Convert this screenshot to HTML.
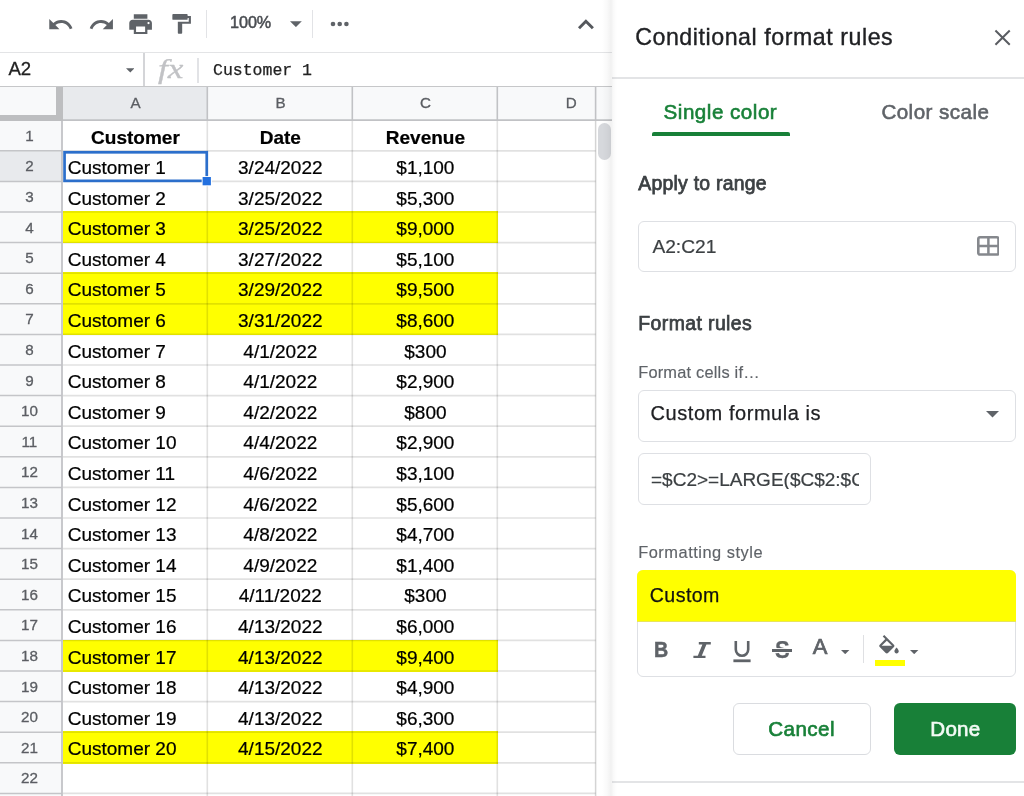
<!DOCTYPE html>
<html><head><meta charset="utf-8"><title>Sheets</title>
<style>
*{box-sizing:border-box;margin:0;padding:0}
html,body{width:1024px;height:796px;overflow:hidden;background:#fff}
body{font-family:"Liberation Sans",sans-serif;color:#000}
#app{will-change:transform;position:relative;width:1024px;height:796px;overflow:hidden;background:#fff}
.abs{position:absolute}
/* toolbar */
#tb{position:absolute;left:0;top:0;width:612px;height:52.5px;background:#fff;border-bottom:1.5px solid #e3e4e6}
#tb svg{position:absolute;fill:#5f6368}
.sep{position:absolute;width:1.5px;background:#e2e3e6}
.zoomtxt{position:absolute;left:230.1px;top:11.4px;font-size:16.2px;line-height:22px;color:#4a4d52;-webkit-text-stroke:0.5px #4a4d52;letter-spacing:-0.1px}
/* formula bar */
#fb{position:absolute;left:0;top:53px;width:612px;height:33.5px;background:#fff}
.nm{position:absolute;left:8.6px;top:4.7px;font-size:18.6px;line-height:22px;color:#222;letter-spacing:-0.2px;-webkit-text-stroke:0.3px #222}
.fx{position:absolute;left:157.6px;top:1.6px;font-family:"Liberation Serif",serif;font-style:italic;font-size:28px;line-height:28px;color:#c1c2c5;transform:scaleX(1.26);transform-origin:left;-webkit-text-stroke:0.3px #c1c2c5}
.ftxt{position:absolute;left:213px;top:6.7px;font-family:"Liberation Mono",monospace;font-size:16.5px;line-height:22px;color:#222;-webkit-text-stroke:0.25px #222}
/* grid */
#grid{position:absolute;left:0;top:0;width:612px;height:796px;overflow:hidden}

.chrow{position:absolute;left:0;top:86.5px;width:612px;height:33.7px;background:#f8f9fa}
.chtop{position:absolute;left:0;top:85.6px;width:612px;height:1.5px;background:#c6c7c9}
.chsel{position:absolute;left:62.6px;top:87px;width:144.8px;height:33.2px;background:#e8eaed}
.chl{position:absolute;top:93px;width:145px;text-align:center;font-size:15.2px;line-height:20px;color:#5b5e63;-webkit-text-stroke:0.3px #5b5e63;padding-left:1.6px}
.chb{position:absolute;left:62.4px;top:119.4px;width:550px;height:1.6px;background:#c3c4c6}
.chv{position:absolute;top:87px;width:1.6px;height:34px;background:#c3c4c6}
.corner-r{position:absolute;left:56.2px;top:87px;width:6.4px;height:34px;background:#bdbec0}
.corner-b{position:absolute;left:0;top:115.2px;width:62.6px;height:5.8px;background:#bdbec0}
.rh{position:absolute;left:0;width:62px;background:#f8f9fa;text-align:center;font-size:15.2px;color:#5b5e63;-webkit-text-stroke:0.3px #5b5e63}
.rh span{position:absolute;left:0;width:58.8px;top:5.5px;line-height:20px;text-align:center}
.rh.sel{background:#e8eaed}
.rhv{position:absolute;left:61.1px;top:120px;width:1.4px;height:676px;background:#c3c4c6}
.hl{position:absolute;left:62.9px;width:435.2px;background:#ffff00}
.ct{position:absolute;font-size:19px;line-height:22px;height:30.6px;padding-top:6.3px;white-space:nowrap;color:#000;-webkit-text-stroke:0.22px #000}
.ct.c{text-align:center}
.ct.b{font-weight:bold;padding-top:7.1px}
.hline{position:absolute;left:62.4px;width:534px;height:1.5px;background:rgba(0,0,0,0.115)}
.hline.rhl{left:0;width:62px;background:#c6c7ca;height:1.35px}
.vline{position:absolute;top:121px;width:1.4px;height:676px;background:rgba(0,0,0,0.115)}
.selbox{position:absolute;left:63.1px;top:150.5px;width:145.3px;height:31.9px;border:2.6px solid #3273d2;border-top-width:2.9px}
.selh{position:absolute;left:202.6px;top:176.6px;width:9.6px;height:9.6px;background:#2f6fd0;border:1px solid #fff}
.vsb{position:absolute;left:598px;top:122.6px;width:13.4px;height:37.4px;border-radius:7px;background:#d6d8dc}
/* sidebar */
#sb{position:absolute;left:612px;top:0;width:412px;height:796px;background:#fff;color:#202124}
#sbshadow{position:absolute;left:602px;top:0;width:15px;height:796px;z-index:5;background:linear-gradient(to right,rgba(0,0,0,0) 0%,rgba(0,0,0,0.022) 35%,rgba(0,0,0,0.055) 60%,rgba(0,0,0,0.02) 78%,rgba(0,0,0,0) 100%)}
#sb .title{position:absolute;left:23.5px;top:24px;font-size:22.6px;line-height:28px;color:#202124;white-space:nowrap;-webkit-text-stroke:0.25px #202124}
#sb .hb{position:absolute;left:0;top:77px;width:412px;height:1.5px;background:#e3e4e6}
#sb .bb{position:absolute;left:0;top:781.3px;width:412px;height:1.5px;background:#e3e4e6}
.tab{position:absolute;top:99px;font-size:20.5px;line-height:26px;white-space:nowrap;-webkit-text-stroke:0.3px currentColor}
.tab.on{color:#188038}
.tab.off{color:#5f6368}
.tabul{position:absolute;left:40.3px;top:131.8px;width:138px;height:4px;border-radius:2px 2px 0 0;background:#188038}
.h2{position:absolute;left:26px;font-size:18.6px;line-height:24px;font-weight:bold;color:#3c4043;white-space:nowrap;letter-spacing:-0.2px}
.lbl{position:absolute;left:26px;font-size:16.2px;line-height:22px;color:#5f6368;white-space:nowrap}
.box{position:absolute;border:1.4px solid #dee0e4;border-radius:6px;background:#fff}
.boxt{position:absolute;font-size:19px;line-height:24px;color:#3c4043;white-space:nowrap}
.btn{position:absolute;top:703.2px;height:51.4px;border-radius:6px}
.btn.cancel{left:120.6px;width:138.4px;border:1.4px solid #dadce0;background:#fff}
.btn.done{left:282.2px;width:122px;background:#188038}
#sb svg{position:absolute}

.gl{position:absolute;left:0;top:0}

</style></head><body>
<div id="app">
<div id="tb">
<svg style="left:46.6px;top:11px" width="27.2" height="27.2" viewBox="0 0 24 24"><path d="M12.5 8c-2.65 0-5.05.99-6.9 2.6L2 7v9h9l-3.62-3.62c1.39-1.16 3.16-1.88 5.12-1.88 3.54 0 6.55 2.31 7.6 5.5l2.37-.78C21.08 11.03 17.15 8 12.5 8z"/></svg>
<svg style="left:87.5px;top:11px" width="27.2" height="27.2" viewBox="0 0 24 24"><path d="M18.4 10.6C16.55 8.99 14.15 8 11.5 8c-4.65 0-8.58 3.03-9.96 7.22L3.9 16c1.05-3.19 4.05-5.5 7.6-5.5 1.95 0 3.73.72 5.12 1.88L13 16h9V7l-3.6 3.6z"/></svg>
<svg style="left:127.2px;top:11.4px" width="27.2" height="26.4" viewBox="0 0 24 24" preserveAspectRatio="none"><path d="M19 8H5c-1.66 0-3 1.34-3 3v6h4v4h12v-4h4v-6c0-1.660-1.340-3-3-3zm-3 11H8v-5h8v5zm3-7c-.55 0-1-.45-1-1s.45-1 1-1 1 .45 1 1-.45 1-1 1zm-1-9H6v4h12V3z"/></svg>
<svg style="left:168.4px;top:12.3px" width="26.2" height="23.6" viewBox="0 0 24 24" preserveAspectRatio="none"><path d="M18 4V3c0-.55-.45-1-1-1H5c-.55 0-1 .45-1 1v4c0 .55.45 1 1 1h12c.55 0 1-.45 1-1V6h1v4H9v11c0 .55.45 1 1 1h2c.55 0 1-.45 1-1v-9h8V4h-3z"/></svg>
<div class="sep" style="left:205.9px;top:9.7px;height:28px"></div>
<div class="zoomtxt">100%</div>
<svg style="left:289.8px;top:20.6px" width="11.8" height="6.3" viewBox="0 0 12 6"><path d="M0 0h12L6 6z"/></svg>
<div class="sep" style="left:311.8px;top:9.7px;height:28px"></div>
<svg style="left:329.8px;top:21.1px" width="20" height="6" viewBox="0 0 20 6"><circle cx="3" cy="3" r="2.3"/><circle cx="9.7" cy="3" r="2.3"/><circle cx="16.4" cy="3" r="2.3"/></svg>
<svg style="left:575px;top:16px;fill:none" width="22" height="16" viewBox="0 0 22 16"><path d="M4 12.2 L10.9 5.2 L17.9 12.2" stroke="#55585d" stroke-width="2.9" fill="none"/></svg>
</div>
<div id="fb">
<div class="nm">A2</div>
<svg style="position:absolute;left:125.6px;top:15px;fill:#5f6368" width="8.6" height="4.6" viewBox="0 0 12 6"><path d="M0 0h12L6 6z"/></svg>
<div class="sep" style="left:143.4px;top:0px;height:33px;background:#d4d5d8"></div>
<div class="fx">fx</div>
<div class="sep" style="left:197.4px;top:4.5px;height:25px"></div>
<div class="ftxt">Customer 1</div>
</div>

<div id="grid">
<div class="rh" style="top:120.2px;height:30.6px"><span>1</span></div>
<div class="ct b c" style="top:120.2px;left:62.8px;width:145.3px">Customer</div>
<div class="ct b c" style="top:120.2px;left:207.8px;width:145.0px">Date</div>
<div class="ct b c" style="top:120.2px;left:352.90000000000003px;width:145.0px">Revenue</div>
<div class="rh sel" style="top:150.8px;height:30.6px"><span>2</span></div>
<div class="ct" style="top:150.8px;left:67.7px">Customer 1</div>
<div class="ct c" style="top:150.8px;left:207.8px;width:145.0px">3/24/2022</div>
<div class="ct c" style="top:150.8px;left:352.90000000000003px;width:145.0px">$1,100</div>
<div class="rh" style="top:181.4px;height:30.6px"><span>3</span></div>
<div class="ct" style="top:181.4px;left:67.7px">Customer 2</div>
<div class="ct c" style="top:181.4px;left:207.8px;width:145.0px">3/25/2022</div>
<div class="ct c" style="top:181.4px;left:352.90000000000003px;width:145.0px">$5,300</div>
<div class="rh" style="top:212.0px;height:30.6px"><span>4</span></div>
<div class="hl" style="top:211.2px;height:32.2px"></div>
<div class="ct" style="top:212.0px;left:67.7px">Customer 3</div>
<div class="ct c" style="top:212.0px;left:207.8px;width:145.0px">3/25/2022</div>
<div class="ct c" style="top:212.0px;left:352.90000000000003px;width:145.0px">$9,000</div>
<div class="rh" style="top:242.6px;height:30.6px"><span>5</span></div>
<div class="ct" style="top:242.6px;left:67.7px">Customer 4</div>
<div class="ct c" style="top:242.6px;left:207.8px;width:145.0px">3/27/2022</div>
<div class="ct c" style="top:242.6px;left:352.90000000000003px;width:145.0px">$5,100</div>
<div class="rh" style="top:273.2px;height:30.6px"><span>6</span></div>
<div class="hl" style="top:272.4px;height:32.2px"></div>
<div class="ct" style="top:273.2px;left:67.7px">Customer 5</div>
<div class="ct c" style="top:273.2px;left:207.8px;width:145.0px">3/29/2022</div>
<div class="ct c" style="top:273.2px;left:352.90000000000003px;width:145.0px">$9,500</div>
<div class="rh" style="top:303.8px;height:30.6px"><span>7</span></div>
<div class="hl" style="top:303.0px;height:32.2px"></div>
<div class="ct" style="top:303.8px;left:67.7px">Customer 6</div>
<div class="ct c" style="top:303.8px;left:207.8px;width:145.0px">3/31/2022</div>
<div class="ct c" style="top:303.8px;left:352.90000000000003px;width:145.0px">$8,600</div>
<div class="rh" style="top:334.4px;height:30.6px"><span>8</span></div>
<div class="ct" style="top:334.4px;left:67.7px">Customer 7</div>
<div class="ct c" style="top:334.4px;left:207.8px;width:145.0px">4/1/2022</div>
<div class="ct c" style="top:334.4px;left:352.90000000000003px;width:145.0px">$300</div>
<div class="rh" style="top:365.0px;height:30.6px"><span>9</span></div>
<div class="ct" style="top:365.0px;left:67.7px">Customer 8</div>
<div class="ct c" style="top:365.0px;left:207.8px;width:145.0px">4/1/2022</div>
<div class="ct c" style="top:365.0px;left:352.90000000000003px;width:145.0px">$2,900</div>
<div class="rh" style="top:395.6px;height:30.6px"><span>10</span></div>
<div class="ct" style="top:395.6px;left:67.7px">Customer 9</div>
<div class="ct c" style="top:395.6px;left:207.8px;width:145.0px">4/2/2022</div>
<div class="ct c" style="top:395.6px;left:352.90000000000003px;width:145.0px">$800</div>
<div class="rh" style="top:426.2px;height:30.6px"><span>11</span></div>
<div class="ct" style="top:426.2px;left:67.7px">Customer 10</div>
<div class="ct c" style="top:426.2px;left:207.8px;width:145.0px">4/4/2022</div>
<div class="ct c" style="top:426.2px;left:352.90000000000003px;width:145.0px">$2,900</div>
<div class="rh" style="top:456.8px;height:30.6px"><span>12</span></div>
<div class="ct" style="top:456.8px;left:67.7px">Customer 11</div>
<div class="ct c" style="top:456.8px;left:207.8px;width:145.0px">4/6/2022</div>
<div class="ct c" style="top:456.8px;left:352.90000000000003px;width:145.0px">$3,100</div>
<div class="rh" style="top:487.4px;height:30.6px"><span>13</span></div>
<div class="ct" style="top:487.4px;left:67.7px">Customer 12</div>
<div class="ct c" style="top:487.4px;left:207.8px;width:145.0px">4/6/2022</div>
<div class="ct c" style="top:487.4px;left:352.90000000000003px;width:145.0px">$5,600</div>
<div class="rh" style="top:518.0px;height:30.6px"><span>14</span></div>
<div class="ct" style="top:518.0px;left:67.7px">Customer 13</div>
<div class="ct c" style="top:518.0px;left:207.8px;width:145.0px">4/8/2022</div>
<div class="ct c" style="top:518.0px;left:352.90000000000003px;width:145.0px">$4,700</div>
<div class="rh" style="top:548.6px;height:30.6px"><span>15</span></div>
<div class="ct" style="top:548.6px;left:67.7px">Customer 14</div>
<div class="ct c" style="top:548.6px;left:207.8px;width:145.0px">4/9/2022</div>
<div class="ct c" style="top:548.6px;left:352.90000000000003px;width:145.0px">$1,400</div>
<div class="rh" style="top:579.2px;height:30.6px"><span>16</span></div>
<div class="ct" style="top:579.2px;left:67.7px">Customer 15</div>
<div class="ct c" style="top:579.2px;left:207.8px;width:145.0px">4/11/2022</div>
<div class="ct c" style="top:579.2px;left:352.90000000000003px;width:145.0px">$300</div>
<div class="rh" style="top:609.8px;height:30.6px"><span>17</span></div>
<div class="ct" style="top:609.8px;left:67.7px">Customer 16</div>
<div class="ct c" style="top:609.8px;left:207.8px;width:145.0px">4/13/2022</div>
<div class="ct c" style="top:609.8px;left:352.90000000000003px;width:145.0px">$6,000</div>
<div class="rh" style="top:640.4px;height:30.6px"><span>18</span></div>
<div class="hl" style="top:639.6px;height:32.2px"></div>
<div class="ct" style="top:640.4px;left:67.7px">Customer 17</div>
<div class="ct c" style="top:640.4px;left:207.8px;width:145.0px">4/13/2022</div>
<div class="ct c" style="top:640.4px;left:352.90000000000003px;width:145.0px">$9,400</div>
<div class="rh" style="top:671.0px;height:30.6px"><span>19</span></div>
<div class="ct" style="top:671.0px;left:67.7px">Customer 18</div>
<div class="ct c" style="top:671.0px;left:207.8px;width:145.0px">4/13/2022</div>
<div class="ct c" style="top:671.0px;left:352.90000000000003px;width:145.0px">$4,900</div>
<div class="rh" style="top:701.6px;height:30.6px"><span>20</span></div>
<div class="ct" style="top:701.6px;left:67.7px">Customer 19</div>
<div class="ct c" style="top:701.6px;left:207.8px;width:145.0px">4/13/2022</div>
<div class="ct c" style="top:701.6px;left:352.90000000000003px;width:145.0px">$6,300</div>
<div class="rh" style="top:732.2px;height:30.6px"><span>21</span></div>
<div class="hl" style="top:731.4px;height:32.2px"></div>
<div class="ct" style="top:732.2px;left:67.7px">Customer 20</div>
<div class="ct c" style="top:732.2px;left:207.8px;width:145.0px">4/15/2022</div>
<div class="ct c" style="top:732.2px;left:352.90000000000003px;width:145.0px">$7,400</div>
<div class="rh" style="top:762.8px;height:30.6px"><span>22</span></div>
<div class="rh" style="top:793.4px;height:30.6px"><span>23</span></div>
<svg class="gl" width="612" height="796" viewBox="0 0 612 796"><path d="M62.6 150.80H595.6" stroke="rgba(0,0,0,0.118)" stroke-width="1.7"/><path d="M0 150.80H62" stroke="#c4c5c8" stroke-width="1.5"/><path d="M62.6 181.40H595.6" stroke="rgba(0,0,0,0.118)" stroke-width="1.7"/><path d="M0 181.40H62" stroke="#c4c5c8" stroke-width="1.5"/><path d="M62.6 212.00H595.6" stroke="rgba(0,0,0,0.118)" stroke-width="1.7"/><path d="M0 212.00H62" stroke="#c4c5c8" stroke-width="1.5"/><path d="M62.6 242.60H595.6" stroke="rgba(0,0,0,0.118)" stroke-width="1.7"/><path d="M0 242.60H62" stroke="#c4c5c8" stroke-width="1.5"/><path d="M62.6 273.20H595.6" stroke="rgba(0,0,0,0.118)" stroke-width="1.7"/><path d="M0 273.20H62" stroke="#c4c5c8" stroke-width="1.5"/><path d="M62.6 303.80H595.6" stroke="rgba(0,0,0,0.118)" stroke-width="1.7"/><path d="M0 303.80H62" stroke="#c4c5c8" stroke-width="1.5"/><path d="M62.6 334.40H595.6" stroke="rgba(0,0,0,0.118)" stroke-width="1.7"/><path d="M0 334.40H62" stroke="#c4c5c8" stroke-width="1.5"/><path d="M62.6 365.00H595.6" stroke="rgba(0,0,0,0.118)" stroke-width="1.7"/><path d="M0 365.00H62" stroke="#c4c5c8" stroke-width="1.5"/><path d="M62.6 395.60H595.6" stroke="rgba(0,0,0,0.118)" stroke-width="1.7"/><path d="M0 395.60H62" stroke="#c4c5c8" stroke-width="1.5"/><path d="M62.6 426.20H595.6" stroke="rgba(0,0,0,0.118)" stroke-width="1.7"/><path d="M0 426.20H62" stroke="#c4c5c8" stroke-width="1.5"/><path d="M62.6 456.80H595.6" stroke="rgba(0,0,0,0.118)" stroke-width="1.7"/><path d="M0 456.80H62" stroke="#c4c5c8" stroke-width="1.5"/><path d="M62.6 487.40H595.6" stroke="rgba(0,0,0,0.118)" stroke-width="1.7"/><path d="M0 487.40H62" stroke="#c4c5c8" stroke-width="1.5"/><path d="M62.6 518.00H595.6" stroke="rgba(0,0,0,0.118)" stroke-width="1.7"/><path d="M0 518.00H62" stroke="#c4c5c8" stroke-width="1.5"/><path d="M62.6 548.60H595.6" stroke="rgba(0,0,0,0.118)" stroke-width="1.7"/><path d="M0 548.60H62" stroke="#c4c5c8" stroke-width="1.5"/><path d="M62.6 579.20H595.6" stroke="rgba(0,0,0,0.118)" stroke-width="1.7"/><path d="M0 579.20H62" stroke="#c4c5c8" stroke-width="1.5"/><path d="M62.6 609.80H595.6" stroke="rgba(0,0,0,0.118)" stroke-width="1.7"/><path d="M0 609.80H62" stroke="#c4c5c8" stroke-width="1.5"/><path d="M62.6 640.40H595.6" stroke="rgba(0,0,0,0.118)" stroke-width="1.7"/><path d="M0 640.40H62" stroke="#c4c5c8" stroke-width="1.5"/><path d="M62.6 671.00H595.6" stroke="rgba(0,0,0,0.118)" stroke-width="1.7"/><path d="M0 671.00H62" stroke="#c4c5c8" stroke-width="1.5"/><path d="M62.6 701.60H595.6" stroke="rgba(0,0,0,0.118)" stroke-width="1.7"/><path d="M0 701.60H62" stroke="#c4c5c8" stroke-width="1.5"/><path d="M62.6 732.20H595.6" stroke="rgba(0,0,0,0.118)" stroke-width="1.7"/><path d="M0 732.20H62" stroke="#c4c5c8" stroke-width="1.5"/><path d="M62.6 762.80H595.6" stroke="rgba(0,0,0,0.118)" stroke-width="1.7"/><path d="M0 762.80H62" stroke="#c4c5c8" stroke-width="1.5"/><path d="M62.6 793.40H595.6" stroke="rgba(0,0,0,0.118)" stroke-width="1.7"/><path d="M0 793.40H62" stroke="#c4c5c8" stroke-width="1.5"/><path d="M62.6 824.00H595.6" stroke="rgba(0,0,0,0.118)" stroke-width="1.7"/><path d="M0 824.00H62" stroke="#c4c5c8" stroke-width="1.5"/><path d="M207.30 121V796" stroke="rgba(0,0,0,0.118)" stroke-width="1.6"/><path d="M352.30 121V796" stroke="rgba(0,0,0,0.118)" stroke-width="1.6"/><path d="M497.30 121V796" stroke="rgba(0,0,0,0.118)" stroke-width="1.6"/><path d="M595.60 121V796" stroke="rgba(0,0,0,0.17)" stroke-width="1.5"/><path d="M62.00 120V796" stroke="#c2c3c7" stroke-width="1.8"/></svg>
<div class="chrow"></div>
<div class="chsel"></div>
<div class="chl" style="left:62.0px;width:145.3px">A</div>
<div class="chl" style="left:207.3px;width:145.0px">B</div>
<div class="chl" style="left:352.3px;width:145.0px">C</div>
<div class="chl" style="left:497.3px;width:146.4px">D</div>
<svg class="gl" width="612" height="796" viewBox="0 0 612 796"><path d="M207.30 87V120.5" stroke="#c1c2c5" stroke-width="1.6"/><path d="M352.30 87V120.5" stroke="#c1c2c5" stroke-width="1.6"/><path d="M497.30 87V120.5" stroke="#c1c2c5" stroke-width="1.6"/><path d="M595.60 87V120.5" stroke="#c1c2c5" stroke-width="1.6"/><path d="M62.4 120.1H612" stroke="#c1c2c5" stroke-width="1.7"/></svg>
<div class="corner-r"></div>
<div class="corner-b"></div>
<div class="chtop"></div>
<svg class="gl" width="612" height="796" viewBox="0 0 612 796"><rect x="64.55" y="152.3" width="142.2" height="28.55" fill="none" stroke="#2c6fcb" stroke-width="2.7"/><rect x="201.7" y="176.100" width="10.2" height="10.2" fill="#fff"/><rect x="202.600" y="177" width="8.300" height="8.300" fill="#2370df"/></svg>
<div class="vsb"></div>
</div>
<div id="sbshadow"></div>
<div id="sb">
<div class="abs t-title" style="left:23.20px;top:25.66px;font-size:23.2px;line-height:23.2px;color:#202124;white-space:nowrap;letter-spacing:0.55px;-webkit-text-stroke:0.35px #202124;">Conditional format rules</div>
<svg style="left:381.900px;top:29px" width="17.200" height="17.200" viewBox="0 0 18 18"><path d="M1.5 1.5 L16.5 16.5 M16.5 1.5 L1.5 16.500" stroke="#5a5d62" stroke-width="2.1" fill="none"/></svg>
<div class="hb"></div>
<div class="abs t-tab1" style="left:51.60px;top:102.26px;font-size:20.6px;line-height:20.6px;color:#188038;white-space:nowrap;letter-spacing:0.5px;-webkit-text-stroke:0.6px #188038;">Single color</div>
<div class="tabul"></div>
<div class="abs t-tab2" style="left:269.40px;top:102.26px;font-size:20.6px;line-height:20.6px;color:#5f6368;white-space:nowrap;letter-spacing:0.45px;-webkit-text-stroke:0.6px #5f6368;">Color scale</div>
<div class="abs t-h1" style="left:26.30px;top:173.78px;font-size:19.4px;line-height:19.4px;color:#3c4043;white-space:nowrap;letter-spacing:0.25px;-webkit-text-stroke:0.75px #3c4043;">Apply to range</div>
<div class="box" style="left:25.80px;top:220.80px;width:378.20px;height:51.40px;"></div>
<div class="abs t-rng" style="left:40.40px;top:237.15px;font-size:19.2px;line-height:19.2px;color:#3c4043;white-space:nowrap;-webkit-text-stroke:0.2px #3c4043;">A2:C21</div>
<svg style="left:364.7px;top:236px" width="22.8" height="19.8" viewBox="0 0 22.8 19.8"><rect x="1.300" y="1.300" width="20.200" height="17.200" rx="1.6" stroke="#85888d" stroke-width="2.6" fill="none"/><path d="M11.400 1.300v17.200 M1.300 9.900h20.200" stroke="#85888d" stroke-width="2.500" fill="none"/></svg>
<div class="abs t-h2" style="left:26.30px;top:314.08px;font-size:19.4px;line-height:19.4px;color:#3c4043;white-space:nowrap;letter-spacing:0.42px;-webkit-text-stroke:0.75px #3c4043;">Format rules</div>
<div class="abs t-l1" style="left:26.20px;top:363.62px;font-size:16.4px;line-height:16.4px;color:#5f6368;white-space:nowrap;letter-spacing:0.2px;-webkit-text-stroke:0.15px #5f6368;">Format cells if…</div>
<div class="box" style="left:25.80px;top:390.00px;width:378.20px;height:51.50px;"></div>
<div class="abs t-sel" style="left:38.60px;top:402.97px;font-size:20px;line-height:20px;color:#202124;white-space:nowrap;letter-spacing:0.55px;-webkit-text-stroke:0.25px #202124;">Custom formula is</div>
<svg style="left:374px;top:411.1px" width="13" height="6.6" viewBox="0 0 12 6"><path d="M0 0h12L6 6z" fill="#5f6368"/></svg>
<div class="box" style="left:25.80px;top:452.60px;width:233.40px;height:52.00px;"></div>
<div class="abs t-f" style="left:39.00px;top:469.62px;font-size:19px;line-height:19px;color:#3c4043;white-space:nowrap;-webkit-text-stroke:0.2px #3c4043;width:208.4px;overflow:hidden;">=$C2&gt;=LARGE($C$2:$C</div>
<div class="abs t-l2" style="left:26.20px;top:544.32px;font-size:16.4px;line-height:16.4px;color:#5f6368;white-space:nowrap;letter-spacing:0.52px;-webkit-text-stroke:0.15px #5f6368;">Formatting style</div>
<div class="box" style="left:25.00px;top:570.20px;width:378.80px;height:107.30px;"></div>
<div class="abs" style="left:25px;top:570.2px;width:378.8px;height:51.6px;background:#ffff00;border-radius:6px 6px 0 0;border-bottom:1.3px solid #e9e55c"></div>
<div class="abs t-cus" style="left:37.80px;top:585.91px;font-size:19.6px;line-height:19.6px;color:#111;white-space:nowrap;letter-spacing:0.42px;-webkit-text-stroke:0.25px #111;">Custom</div>
<div class="abs" style="left:42.4px;top:636.8px;font-size:22.6px;line-height:26px;font-weight:bold;color:#5f6368;-webkit-text-stroke:0.5px #5f6368;transform:scaleX(0.87);transform-origin:left">B</div>
<svg style="left:81px;top:641.7px" width="18" height="16.400" viewBox="0 0 18 16.4"><path d="M5.800 0H17.800v2.600h-4.400L8.800 13.800h3.700v2.600H0.400v-2.600h4.400L9.400 2.600H5.800z" fill="#5f6368"/></svg>
<svg style="left:121px;top:640.6px" width="18" height="22" viewBox="0 0 18 22"><path d="M2.800 0v8.600a6.200 6.200 0 0 0 12.400 0V0" stroke="#5f6368" stroke-width="2.600" fill="none"/><path d="M0.400 19.800h17.200" stroke="#5f6368" stroke-width="2.800"/></svg>
<div class="abs" style="left:162.600px;top:636.5px;font-size:24.6px;line-height:26px;font-weight:bold;color:#5f6368;-webkit-text-stroke:0.25px #5f6368;transform:scaleX(0.9);transform-origin:left">S</div>
<div class="abs" style="left:160.200px;top:649px;width:19.800px;height:2.500px;background:#5f6368;box-shadow:0 0 0 0.900px #fff"></div>
<div class="abs" style="left:200.700px;top:634.300px;font-size:22px;line-height:26px;color:#5f6368;-webkit-text-stroke:0.700px #5f6368">A</div>
<svg style="left:229.200px;top:650.200px" width="8.400" height="4.200" viewBox="0 0 12 6"><path d="M0 0h12L6 6z" fill="#5f6368"/></svg>
<div class="sep" style="left:251.300px;top:634.800px;height:28.600px;width:1px;background:#dfe0e3"></div>
<svg style="left:264px;top:635px" width="26" height="26" viewBox="0 0 24 24"><path d="M16.560 8.940L7.620 0 6.210 1.410l2.380 2.380-5.150 5.150c-.59.59-.59 1.540 0 2.120l5.500 5.500c.29.29.68.440 1.060.440s.770-.150 1.060-.440l5.500-5.500c.59-.58.590-1.530 0-2.120zM5.210 10L10 5.210 14.790 10H5.210zM19 11.500s-2 2.170-2 3.500c0 1.100.9 2 2 2s2-.9 2-2c0-1.330-2-3.500-2-3.500z" fill="#5f6368"/></svg>
<div class="abs" style="left:263px;top:660.400px;width:29.500px;height:5.700px;background:#ffff00"></div>
<svg style="left:298.400px;top:650.200px" width="8.400" height="4.200" viewBox="0 0 12 6"><path d="M0 0h12L6 6z" fill="#5f6368"/></svg>

<div class="btn cancel"></div>
<div class="btn done"></div>
<div class="abs t-can" style="left:156.20px;top:718.56px;font-size:20.6px;line-height:20.6px;color:#188038;white-space:nowrap;letter-spacing:0.45px;-webkit-text-stroke:0.65px #188038;">Cancel</div>
<div class="abs t-done" style="left:318.30px;top:718.56px;font-size:20.6px;line-height:20.6px;color:#f4fbf6;white-space:nowrap;letter-spacing:0.25px;-webkit-text-stroke:0.65px #f4fbf6;">Done</div>
<div class="bb"></div>
</div>
</div>
</body></html>
